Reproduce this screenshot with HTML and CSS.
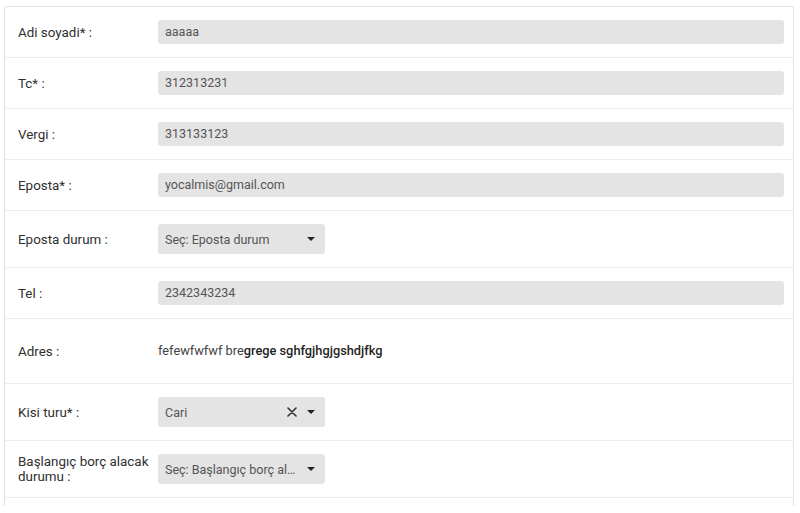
FILE: index.html
```html
<!DOCTYPE html>
<html lang="tr">
<head>
<meta charset="utf-8">
<title>Form</title>
<link rel="stylesheet" href="styles.css">
</head>
<body>
<div class="card">
  <div class="row">
    <div class="label">Adi soyadi* :</div>
    <div class="control"><div class="input">aaaaa</div></div>
  </div>
  <div class="row">
    <div class="label">Tc* :</div>
    <div class="control"><div class="input">312313231</div></div>
  </div>
  <div class="row">
    <div class="label">Vergi :</div>
    <div class="control"><div class="input">313133123</div></div>
  </div>
  <div class="row">
    <div class="label">Eposta* :</div>
    <div class="control"><div class="input">yocalmis@gmail.com</div></div>
  </div>
  <div class="row">
    <div class="label">Eposta durum :</div>
    <div class="control">
      <div class="select">
        <span class="sel-text">Seç: Eposta durum</span>
        <span class="caret"></span>
      </div>
    </div>
  </div>
  <div class="row">
    <div class="label">Tel :</div>
    <div class="control"><div class="input">2342343234</div></div>
  </div>
  <div class="row row-text">
    <div class="label">Adres :</div>
    <div class="control"><div class="rich">fefewfwfwf bre<b>grege sghfgjhgjgshdjfkg</b></div></div>
  </div>
  <div class="row">
    <div class="label">Kisi turu* :</div>
    <div class="control">
      <div class="select">
        <span class="sel-text">Cari</span>
        <svg class="clear" width="10" height="10" viewBox="0 0 10 10" aria-hidden="true"><path d="M1 1 L9 9 M9 1 L1 9" stroke="#333" stroke-width="1.6" stroke-linecap="round" fill="none"/></svg>
        <span class="caret"></span>
      </div>
    </div>
  </div>
  <div class="row">
    <div class="label">Başlangıç borç alacak durumu :</div>
    <div class="control">
      <div class="select">
        <span class="sel-text">Seç: Başlangıç borç alacak durumu</span>
        <span class="caret"></span>
      </div>
    </div>
  </div>
  <div class="tail"></div>
</div>
</body>
</html>
```

FILE: styles.css
```css
* { box-sizing: border-box; }
html, body { margin: 0; padding: 0; background: #ffffff; }
body {
  font-family: Roboto, "Liberation Sans", Arial, sans-serif;
  font-size: 13px;
  color: #333333;
}
.card {
  margin: 6px 6px 0 4px;
  border: 1px solid #e3e3e3;
  border-bottom: none;
  border-radius: 3px 3px 0 0;
  background: #ffffff;
}
.row {
  display: grid;
  grid-template-columns: 134px 1fr;
  column-gap: 6px;
  align-items: center;
  padding: 13px 9px 13px 13px;
  border-bottom: 1px solid #ececec;
}
.row-text { padding-top: 24px; padding-bottom: 24px; }
.label {
  font-size: 13.4px;
  line-height: 15px;
  color: #2f2f2f;
}
.control { min-width: 0; }
.input {
  height: 24px;
  line-height: 24px;
  padding: 0 7px;
  font-size: 12.5px;
  background: #e4e4e4;
  border-radius: 3px;
  color: #555555;
}
.select {
  display: flex;
  align-items: center;
  width: 167px;
  height: 30px;
  padding: 0 10px 0 7px;
  font-size: 12.5px;
  background: #e4e4e4;
  border-radius: 3px;
  color: #555555;
}
.sel-text {
  flex: 1;
  min-width: 0;
  white-space: nowrap;
  overflow: hidden;
  text-overflow: ellipsis;
  padding-right: 6px;
}
.clear {
  flex: none;
  margin-right: 10px;
}
.caret {
  flex: none;
  width: 0;
  height: 0;
  border-left: 4px solid transparent;
  border-right: 4px solid transparent;
  border-top: 4px solid #222222;
}
.rich { font-size: 12.8px; line-height: 16px; color: #444444; }
.rich b { font-weight: 500; color: #1f1f1f; }
.tail { height: 8px; }
```
